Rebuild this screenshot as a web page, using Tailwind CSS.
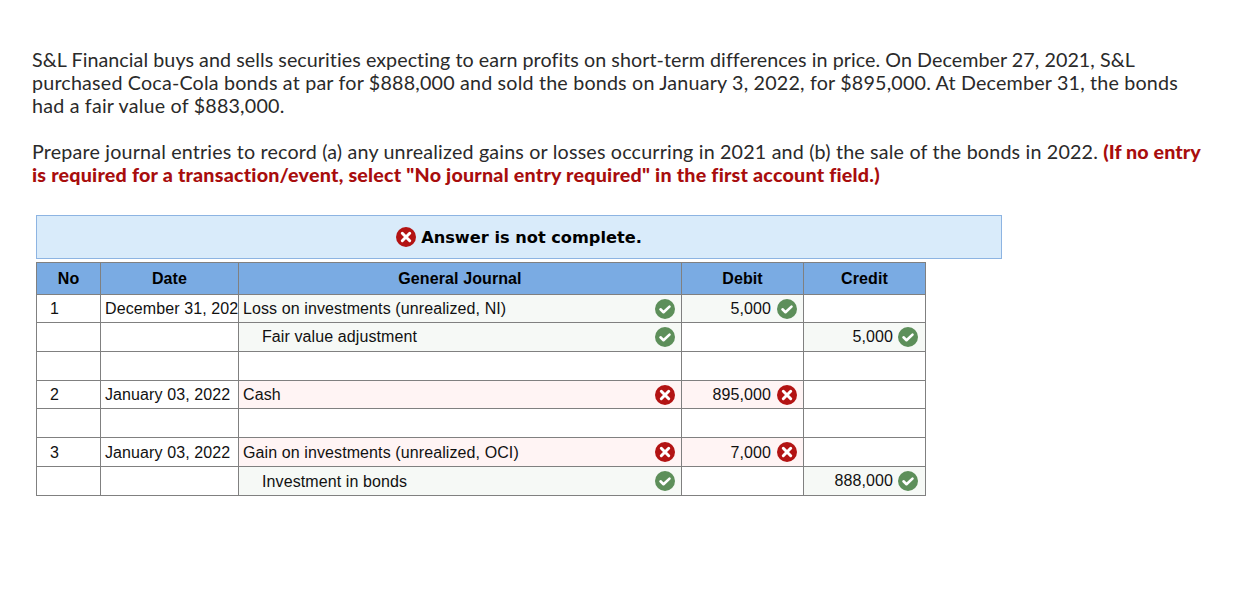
<!DOCTYPE html>
<html lang="en">
<head>
    <meta charset="UTF-8">
    <title>Journal entry answer</title>
    <script src="https://cdn.jsdelivr.net/npm/@tailwindcss/browser@4"></script>
</head>
<body class="bg-white min-h-screen font-['Lato',sans-serif] text-[#2a2a2a] [font-variant-ligatures:none]">
    <div class="pl-[32px] pr-[40px] pt-[48px]">
        <p class="text-[19.7px] leading-[23px]"><span class="tracking-[0.06px]">S&amp;L Financial buys and sells securities expecting to earn profits on short-term differences in price. On December 27, 2021, S&amp;L</span><br><span class="tracking-[0.19px]">purchased Coca-Cola bonds at par for $888,000 and sold the bonds on January 3, 2022, for $895,000. At December 31, the bonds</span><br><span class="tracking-[0.2px]">had a fair value of $883,000.</span></p>
        <p class="text-[19.7px] leading-[23px] mt-[23px]"><span class="tracking-[0.18px]">Prepare journal entries to record (a) any unrealized gains or losses occurring in 2021 and (b) the sale of the bonds in 2022. </span><b class="font-black text-[#a80d0d]"><span class="tracking-[0.08px]">(If no entry</span><br><span class="tracking-[0.21px]">is required for a transaction/event, select "No journal entry required" in the first account field.)</span></b></p>
    </div>

    <div class="ml-[36px] mt-[29px] w-[966px] h-[44px] bg-[#d9ebfa] border border-[#8db4e2] flex items-center justify-center gap-[5px] font-['DejaVu_Sans',sans-serif] font-bold text-[16.2px] text-black">
        <svg width="20" height="20" viewBox="0 0 20 20"><circle cx="10" cy="10" r="10" fill="#b31313"/><path d="M6.3 6.3l7.4 7.4M13.7 6.3l-7.4 7.4" stroke="#fff" stroke-width="3" stroke-linecap="round"/></svg>
        <span class="relative top-[1px]">Answer is not complete.</span>
    </div>

    <table class="ml-[36px] mt-[3px] w-[890px] table-fixed border-collapse font-['Liberation_Sans',sans-serif] text-[16px] text-[#111] tracking-[0.1px]">
        <colgroup>
            <col class="w-[64px]"><col class="w-[138px]"><col class="w-[443px]"><col class="w-[122px]"><col class="w-[122px]">
        </colgroup>
        <thead>
            <tr class="h-[32px] bg-[#7aabe3] font-bold text-black">
                <th class="border border-[#808080] font-bold">No</th>
                <th class="border border-[#808080] font-bold">Date</th>
                <th class="border border-[#808080] font-bold">General Journal</th>
                <th class="border border-[#808080] font-bold">Debit</th>
                <th class="border border-[#808080] font-bold">Credit</th>
            </tr>
        </thead>
        <tbody>
            <tr class="h-[28px]">
                <td class="border border-[#808080] pl-[13px]">1</td>
                <td class="border border-[#808080] pl-[4px] overflow-hidden whitespace-nowrap">December 31, 2021</td>
                <td class="border border-[#808080] bg-[#f6f9f6] pl-[4px] pr-[6px]"><div class="flex items-center justify-between">Loss on investments (unrealized, NI)<svg width="20" height="20" viewBox="0 0 20 20"><circle cx="10" cy="10" r="10" fill="#5d8f5a"/><path d="M5.5 10.3l3 2.9 6-5.6" fill="none" stroke="#fff" stroke-width="2.6" stroke-linecap="round" stroke-linejoin="round"/></svg></div></td>
                <td class="border border-[#808080] bg-[#f6f9f6] px-[6px]"><div class="flex items-center justify-end gap-[6px]">5,000<svg width="20" height="20" viewBox="0 0 20 20"><circle cx="10" cy="10" r="10" fill="#5d8f5a"/><path d="M5.5 10.3l3 2.9 6-5.6" fill="none" stroke="#fff" stroke-width="2.6" stroke-linecap="round" stroke-linejoin="round"/></svg></div></td>
                <td class="border border-[#808080]"></td>
            </tr>
            <tr class="h-[29px]">
                <td class="border border-[#808080]"></td>
                <td class="border border-[#808080]"></td>
                <td class="border border-[#808080] bg-[#f6f9f6] pl-[23px] pr-[6px]"><div class="flex items-center justify-between">Fair value adjustment<svg width="20" height="20" viewBox="0 0 20 20"><circle cx="10" cy="10" r="10" fill="#5d8f5a"/><path d="M5.5 10.3l3 2.9 6-5.6" fill="none" stroke="#fff" stroke-width="2.6" stroke-linecap="round" stroke-linejoin="round"/></svg></div></td>
                <td class="border border-[#808080]"></td>
                <td class="border border-[#808080] bg-[#f6f9f6] pl-[6px] pr-[7px]"><div class="flex items-center justify-end gap-[5px]">5,000<svg width="20" height="20" viewBox="0 0 20 20"><circle cx="10" cy="10" r="10" fill="#5d8f5a"/><path d="M5.5 10.3l3 2.9 6-5.6" fill="none" stroke="#fff" stroke-width="2.6" stroke-linecap="round" stroke-linejoin="round"/></svg></div></td>
            </tr>
            <tr class="h-[29px]">
                <td class="border border-[#808080]"></td>
                <td class="border border-[#808080]"></td>
                <td class="border border-[#808080]"></td>
                <td class="border border-[#808080]"></td>
                <td class="border border-[#808080]"></td>
            </tr>
            <tr class="h-[28px]">
                <td class="border border-[#808080] pl-[13px]">2</td>
                <td class="border border-[#808080] pl-[4px] overflow-hidden whitespace-nowrap">January 03, 2022</td>
                <td class="border border-[#808080] bg-[#fff4f4] pl-[4px] pr-[6px]"><div class="flex items-center justify-between">Cash<svg width="20" height="20" viewBox="0 0 20 20"><circle cx="10" cy="10" r="10" fill="#b31313"/><path d="M6.3 6.3l7.4 7.4M13.7 6.3l-7.4 7.4" stroke="#fff" stroke-width="3" stroke-linecap="round"/></svg></div></td>
                <td class="border border-[#808080] bg-[#fff4f4] px-[6px]"><div class="flex items-center justify-end gap-[6px]">895,000<svg width="20" height="20" viewBox="0 0 20 20"><circle cx="10" cy="10" r="10" fill="#b31313"/><path d="M6.3 6.3l7.4 7.4M13.7 6.3l-7.4 7.4" stroke="#fff" stroke-width="3" stroke-linecap="round"/></svg></div></td>
                <td class="border border-[#808080]"></td>
            </tr>
            <tr class="h-[29px]">
                <td class="border border-[#808080]"></td>
                <td class="border border-[#808080]"></td>
                <td class="border border-[#808080]"></td>
                <td class="border border-[#808080]"></td>
                <td class="border border-[#808080]"></td>
            </tr>
            <tr class="h-[29px]">
                <td class="border border-[#808080] pl-[13px] pt-[1px]">3</td>
                <td class="border border-[#808080] pl-[4px] pt-[1px] overflow-hidden whitespace-nowrap">January 03, 2022</td>
                <td class="border border-[#808080] bg-[#fff4f4] pl-[4px] pr-[6px]"><div class="flex items-center justify-between"><span class="relative top-[1px]">Gain on investments (unrealized, OCI)</span><svg width="20" height="20" viewBox="0 0 20 20"><circle cx="10" cy="10" r="10" fill="#b31313"/><path d="M6.3 6.3l7.4 7.4M13.7 6.3l-7.4 7.4" stroke="#fff" stroke-width="3" stroke-linecap="round"/></svg></div></td>
                <td class="border border-[#808080] bg-[#fff4f4] px-[6px]"><div class="flex items-center justify-end gap-[6px]"><span class="relative top-[1px]">7,000</span><svg width="20" height="20" viewBox="0 0 20 20"><circle cx="10" cy="10" r="10" fill="#b31313"/><path d="M6.3 6.3l7.4 7.4M13.7 6.3l-7.4 7.4" stroke="#fff" stroke-width="3" stroke-linecap="round"/></svg></div></td>
                <td class="border border-[#808080]"></td>
            </tr>
            <tr class="h-[29px]">
                <td class="border border-[#808080]"></td>
                <td class="border border-[#808080]"></td>
                <td class="border border-[#808080] bg-[#f6f9f6] pl-[23px] pr-[6px]"><div class="flex items-center justify-between"><span class="relative top-[1px]">Investment in bonds</span><svg width="20" height="20" viewBox="0 0 20 20"><circle cx="10" cy="10" r="10" fill="#5d8f5a"/><path d="M5.5 10.3l3 2.9 6-5.6" fill="none" stroke="#fff" stroke-width="2.6" stroke-linecap="round" stroke-linejoin="round"/></svg></div></td>
                <td class="border border-[#808080]"></td>
                <td class="border border-[#808080] bg-[#f6f9f6] pl-[6px] pr-[7px]"><div class="flex items-center justify-end gap-[5px]">888,000<svg width="20" height="20" viewBox="0 0 20 20"><circle cx="10" cy="10" r="10" fill="#5d8f5a"/><path d="M5.5 10.3l3 2.9 6-5.6" fill="none" stroke="#fff" stroke-width="2.6" stroke-linecap="round" stroke-linejoin="round"/></svg></div></td>
            </tr>
        </tbody>
    </table>
</body>
</html>
